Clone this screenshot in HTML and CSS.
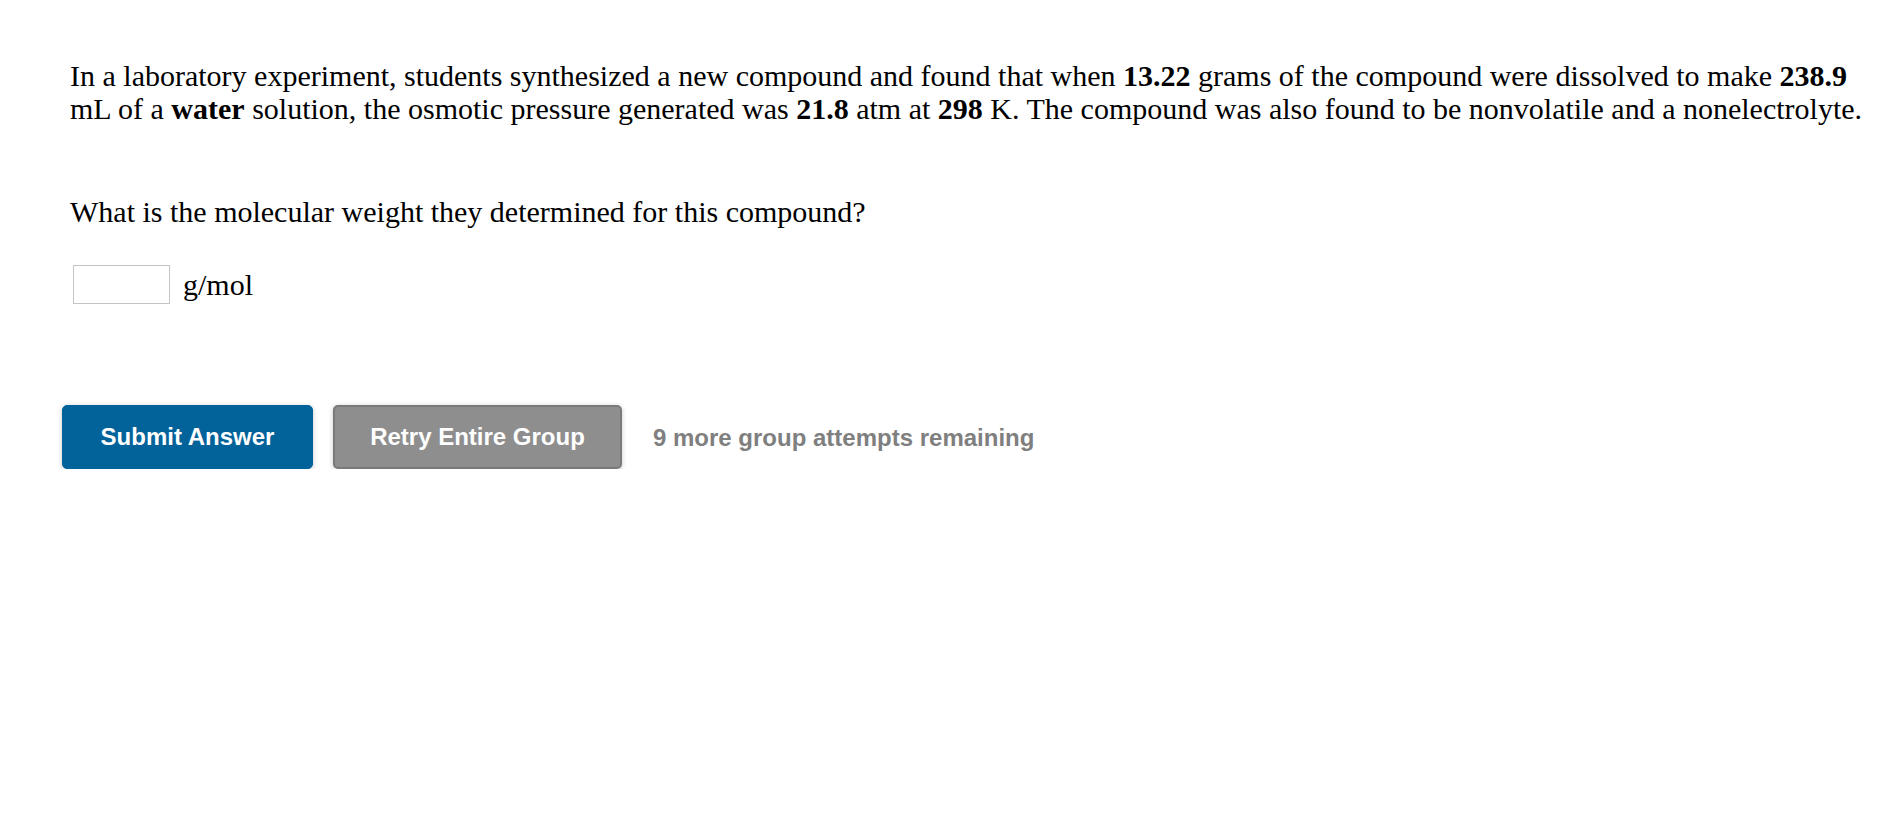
FILE: index.html
```html
<!DOCTYPE html>
<html>
<head>
<meta charset="utf-8">
<link rel="stylesheet" href="styles.css">
</head>
<body>
<div class="page">
  <p class="question">In a laboratory experiment, students synthesized a new compound and found that when <b>13.22</b> grams of the compound were dissolved to make <b>238.9</b> mL of a <b>water</b> solution, the osmotic pressure generated was <b>21.8</b> atm at <b>298</b> K. The compound was also found to be nonvolatile and a nonelectrolyte.</p>
  <p class="ask">What is the molecular weight they determined for this compound?</p>
  <div class="answer">
    <input class="field" type="text">
    <span class="unit">g/mol</span>
  </div>
  <div class="actions">
    <button class="btn btn-submit">Submit Answer</button>
    <button class="btn btn-retry">Retry Entire Group</button>
    <span class="remaining">9 more group attempts remaining</span>
  </div>
</div>
</body>
</html>
```
FILE: styles.css
```css
html, body {
  margin: 0;
  padding: 0;
  background: #ffffff;
}
.page {
  padding: 59px 20px 0 70px;
  font-family: "Liberation Serif", "Times New Roman", serif;
  font-size: 30px;
  line-height: 33px;
  color: #000;
}
.question {
  margin: 0;
}
.ask {
  margin: 70px 0 0 0;
}
.answer {
  display: flex;
  align-items: center;
  gap: 13px;
  margin-top: 37px;
}
.field {
  width: 97px;
  height: 39px;
  box-sizing: border-box;
  border: 1px solid #c4c4c4;
  margin: 0 0 0 3px;
  padding: 0;
  font-size: 20px;
}
.actions {
  display: flex;
  align-items: center;
  margin-top: 101px;
  margin-left: -8px;
}
.btn {
  font-family: "Liberation Sans", Arial, sans-serif;
  font-weight: bold;
  font-size: 24px;
  color: #fff;
  border-radius: 5px;
  height: 64px;
  box-shadow: 0 1px 5px rgba(0,0,0,0.22);
  cursor: pointer;
}
.btn-submit {
  background: #02629a;
  border: 1px solid #02629a;
  width: 251px;
}
.btn-retry {
  background: #8e8e8e;
  border: 2px solid #7a7a7a;
  width: 289px;
  margin-left: 20px;
}
.remaining {
  font-family: "Liberation Sans", Arial, sans-serif;
  font-weight: bold;
  font-size: 24px;
  color: #7f7f7f;
  margin-left: 31px;
}
```
